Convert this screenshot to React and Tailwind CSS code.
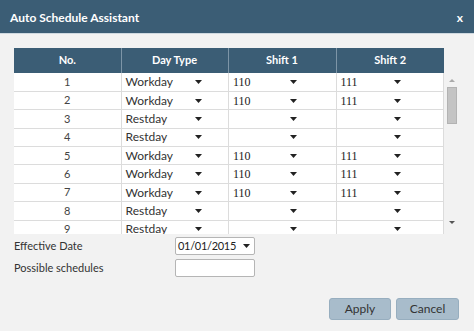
const Arrow = () => (
  <svg width="7" height="4" viewBox="0 0 7 4" className="shrink-0">
    <path d="M0 0H7L3.5 4Z" fill="#222" />
  </svg>
);

const rows = [
  ['1', 'Workday', '110', '111'],
  ['2', 'Workday', '110', '111'],
  ['3', 'Restday', '', ''],
  ['4', 'Restday', '', ''],
  ['5', 'Workday', '110', '111'],
  ['6', 'Workday', '110', '111'],
  ['7', 'Workday', '110', '111'],
  ['8', 'Restday', '', ''],
  ['9', 'Restday', '', ''],
];

const SelectCell = ({ value, serif, width }) => (
  <td className="border-r border-[#dcdcdc] px-[4px] p-0">
    <div className={`flex items-center h-[17px] ${width}`}>
      <span className={serif ? "flex-1 text-[12px] font-['Liberation_Serif',serif] text-[#222]" : 'flex-1 text-[12px] text-[#333]'}>{value}</span>
      <Arrow />
    </div>
  </td>
);

export default function App() {
  return (
    <div className="w-[474px] h-[331px] bg-[#f2f2f2] font-['Lato',sans-serif] overflow-hidden flex flex-col">
      {/* Title bar */}
      <div className="h-[34px] bg-[#3b5d75] flex items-center justify-between pl-[10px] pr-[11px] pt-[2px] border-b border-[#cfd9e0]">
        <span className="text-white font-bold text-[12px]">Auto Schedule Assistant</span>
        <span className="text-white font-bold text-[12px]">x</span>
      </div>

      <div className="flex-1 flex flex-col pl-[14px] pr-[14px] pt-[14px]">
        {/* Table header */}
        <table className="w-[430px] border-collapse table-fixed">
          <thead>
            <tr className="h-[25px] bg-[#3b5d75] text-white text-[11px]">
              <th className="w-[107px] border-r border-[#7d95a7] font-bold">No.</th>
              <th className="w-[107px] border-r border-[#7d95a7] font-bold">Day Type</th>
              <th className="w-[108px] border-r border-[#7d95a7] font-bold">Shift 1</th>
              <th className="w-[108px] font-bold">Shift 2</th>
            </tr>
          </thead>
        </table>
        {/* Body with scrollbar */}
        <div className="flex h-[161px]">
          <div className="w-[430px] overflow-hidden bg-white">
            <table className="w-[430px] border-collapse table-fixed">
              <tbody>
                {rows.map(([no, day, s1, s2]) => (
                  <tr key={no} className="h-[18.4px] border-b border-[#dcdcdc]">
                    <td className="w-[107px] border-r border-[#dcdcdc] text-center text-[11px] text-[#444] p-0">{no}</td>
                    <SelectCell value={day} width="pr-[22px]" />
                    <SelectCell value={s1} serif width="pr-[35px]" />
                    <SelectCell value={s2} serif width="pr-[38px]" />
                  </tr>
                ))}
              </tbody>
            </table>
          </div>
          {/* Scrollbar */}
          <div className="w-[16px] flex flex-col items-center pt-[6px]">
            <svg width="6" height="3" viewBox="0 0 6 3">
              <path d="M0 3H6L3 0Z" fill="#aaa" />
            </svg>
            <div className="w-[10px] h-[37px] bg-[#c4c4c4] mt-[5px] border border-[#b3b3b3]" />
            <div className="flex-1" />
            <svg width="6" height="3" viewBox="0 0 6 3" className="mb-[10px]">
              <path d="M0 0H6L3 3Z" fill="#555" />
            </svg>
          </div>
        </div>

        {/* Form */}
        <div className="flex items-center h-[18px] mt-[3px]">
          <span className="w-[161px] text-[11px] text-[#333]">Effective Date</span>
          <div className="w-[80px] h-[18px] bg-white border border-[#b5b5b5] rounded-[2px] flex items-center pl-[2px] pr-[4px]">
            <span className="flex-1 text-[11px] tracking-[-0.3px] text-[#222]">01/01/2015</span>
            <Arrow />
          </div>
        </div>
        <div className="flex items-center h-[18px] mt-[4px]">
          <span className="w-[161px] text-[11px] text-[#333]">Possible schedules</span>
          <div className="w-[80px] h-[18px] bg-white border border-[#b5b5b5] rounded-[2px]" />
        </div>

        <div className="flex justify-end gap-[5px] mt-[21px] pr-[1px]">
          <button className="w-[62px] h-[22px] rounded-[3px] bg-[#a8bccb] border border-[#97aebf] text-[12px] text-[#333]">Apply</button>
          <button className="w-[63px] h-[22px] rounded-[3px] bg-[#a8bccb] border border-[#97aebf] text-[12px] text-[#333]">Cancel</button>
        </div>
      </div>
    </div>
  );
}
